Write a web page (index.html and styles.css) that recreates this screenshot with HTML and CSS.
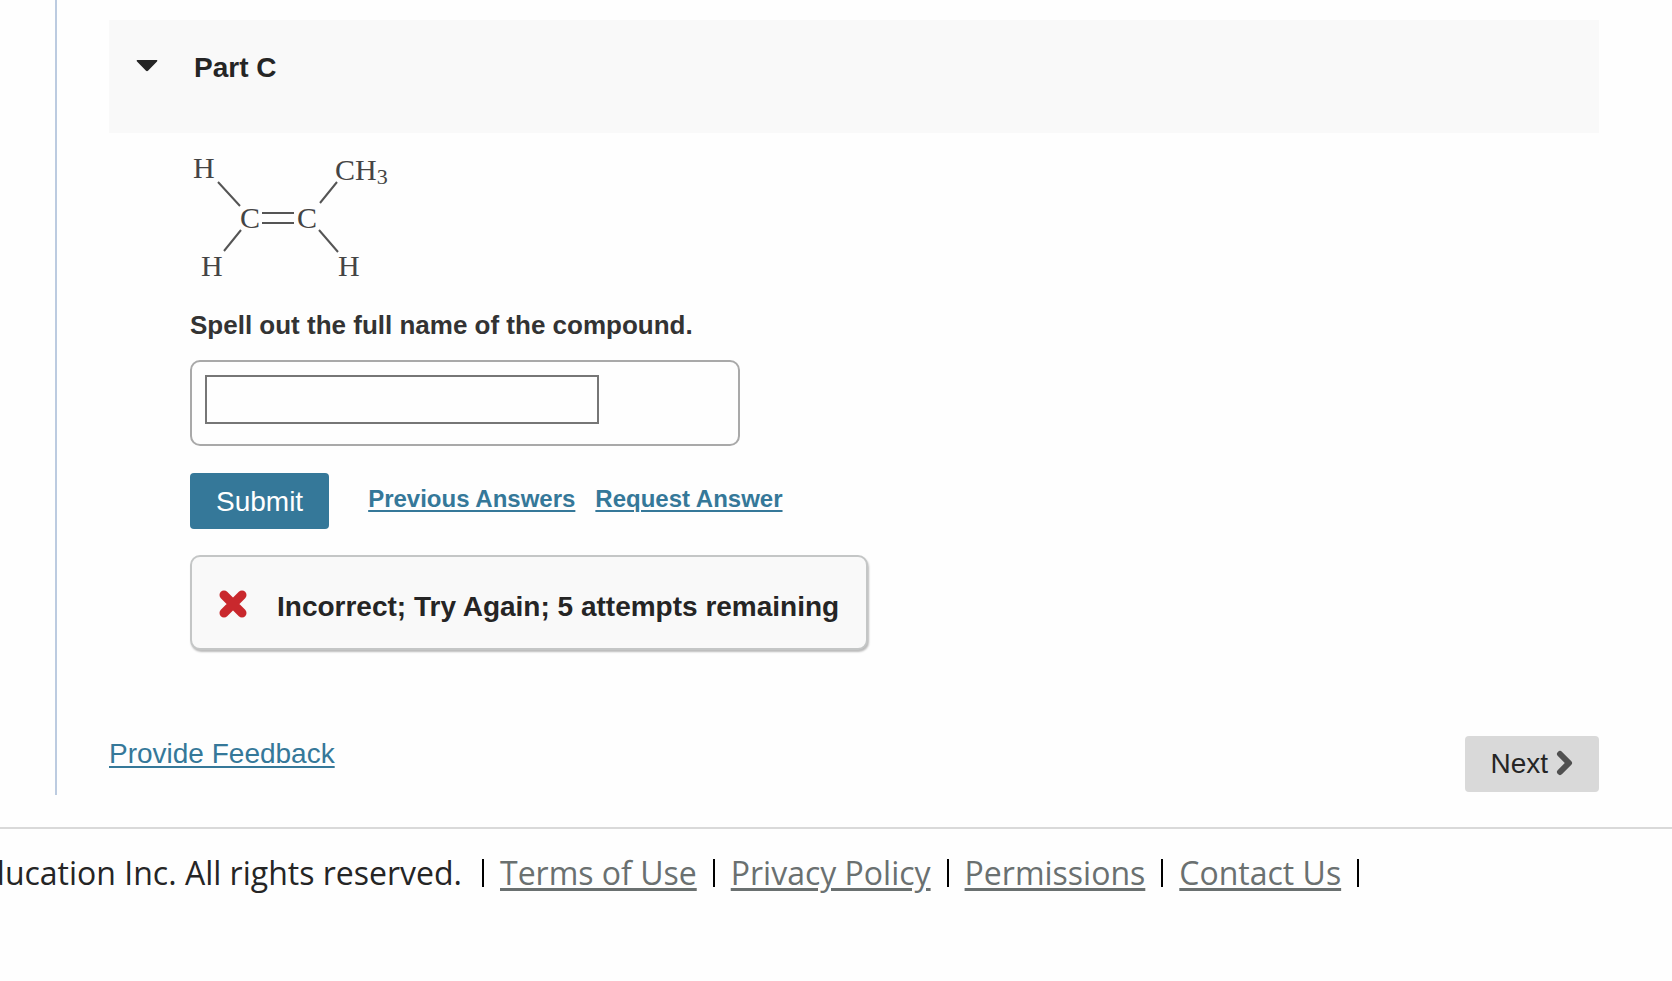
FILE: index.html
```html
<!DOCTYPE html>
<html lang="en">
  <head>
    <meta charset="UTF-8" />
    <meta name="viewport" content="width=device-width, initial-scale=1.0" />
    <title>Part C</title>
    <link rel="stylesheet" href="styles.css">
  </head>
  <body>
    <main class="content">
      <!-- Part header -->
      <button type="button" class="part-header">
        <svg class="caret" width="22" height="12" viewBox="0 0 22 12" aria-hidden="true">
          <path d="M1 0h20q.8.8 0 1.600L12 10.800q-1 .8-2 0L1 1.600Q.2.800 1 0z" />
        </svg>
        <span>Part C</span>
      </button>

      <div class="part-body">
        <svg class="molecule" width="200" height="124" viewBox="0 0 200 124" role="img" aria-label="Structural formula">
          <g class="bonds">
            <path d="M28 31L50 55M34 100L51 79M130 52L147 31M129 79L148 101" />
            <path d="M72 62H104M72 72H104" />
          </g>
          <text x="3" y="27">H</text>
          <text x="145" y="29">CH<tspan class="sub" dy="4">3</tspan></text>
          <text x="50" y="77">C</text>
          <text x="107" y="77">C</text>
          <text x="11" y="125">H</text>
          <text x="148" y="125">H</text>
        </svg>

        <form class="answer-form">
          <label for="answer">Spell out the full name of the compound.</label>
          <div class="answer-box">
            <input type="text" id="answer" name="answer" />
          </div>
          <div class="actions">
            <button type="submit" class="submit">Submit</button>
            <a href="#previous">Previous Answers</a>
            <a href="#request">Request Answer</a>
          </div>
        </form>

        <div class="result">
          <svg width="28" height="28" viewBox="0 0 28 28" aria-hidden="true">
            <path d="M5 5L23 23M23 5L5 23" />
          </svg>
          <span>Incorrect; Try Again; 5 attempts remaining</span>
        </div>
      </div>

      <div class="bottom-row">
        <a href="#feedback">Provide Feedback</a>
        <button type="button" class="next">
          Next
          <svg width="18" height="28" viewBox="0 0 18 28" aria-hidden="true">
            <path d="M4 4L13 13L4 22" />
          </svg>
        </button>
      </div>
    </main>

    <!-- Footer -->
    <footer class="footer">
      <div class="copyright"><span>Education Inc. All rights reserved.</span></div>
      <ul class="footer-links">
        <li><a href="#terms">Terms of Use</a></li>
        <li><a href="#privacy">Privacy Policy</a></li>
        <li><a href="#permissions">Permissions</a></li>
        <li><a href="#contact">Contact Us</a></li>
      </ul>
    </footer>
  </body>
</html>
```

FILE: styles.css
```css
* {
  box-sizing: border-box;
}

body {
  margin: 0;
  background: #fefefe;
  color: #252525;
  font-family: "Liberation Sans", Arial, sans-serif;
  font-size: 28px;
  line-height: 32px;
}

a {
  color: #357899;
  text-underline-offset: 3px;
  text-decoration-thickness: 2px;
}

button {
  border: none;
  border-radius: 4px;
  font: inherit;
  cursor: pointer;
}

.content {
  margin-left: 55px;
  padding: 20px 73px 3px 52px;
  border-left: 2px solid #bccbe0;
}

/* Part header */
.part-header {
  display: flex;
  align-items: flex-start;
  gap: 36px;
  width: 100%;
  height: 113px;
  padding: 32px 27px;
  border-radius: 0;
  background: #f9f9f9;
  color: #252525;
  font-weight: bold;
}

.caret {
  margin-top: 8px;
  fill: #252525;
}

.part-body {
  padding: 18px 0 0 81px;
}

/* Structure drawing */
.molecule {
  display: block;
  overflow: visible;
  font-family: "Liberation Serif", "Times New Roman", serif;
  font-size: 30px;
  fill: #444;
}

.molecule .sub {
  font-size: 22px;
}

.bonds {
  fill: none;
  stroke: #555;
  stroke-width: 2;
}

/* Answer */
.answer-form label {
  display: block;
  margin: 34px 0 19px;
  color: #333;
  font-size: 26px;
  font-weight: bold;
}

.answer-box {
  max-width: 550px;
  height: 86px;
  padding: 13px;
  border: 2px solid #a9a9a9;
  border-radius: 10px;
}

.answer-box input {
  display: block;
  width: 394px;
  max-width: 100%;
  height: 49px;
  padding: 4px 8px;
  border: 2px solid #767676;
  background: #fefefe;
  font: inherit;
}

.actions {
  display: flex;
  align-items: center;
  gap: 20px;
  margin-top: 27px;
}

.actions a {
  padding-bottom: 4px;
  font-size: 24px;
  font-weight: bold;
}

.submit {
  height: 56px;
  margin-right: 19px;
  padding: 2px 26px 0;
  background: #357899;
  color: #fff;
}

.result {
  display: flex;
  align-items: center;
  gap: 30px;
  width: fit-content;
  height: 95px;
  margin-top: 26px;
  padding: 8px 27px 0;
  border: 2px solid #c4c6c6;
  border-radius: 10px;
  background: #f9f9f9;
  box-shadow: 1px 2px 2px #bbb;
  font-weight: bold;
}

.result svg {
  margin-bottom: 6px;
  stroke: #c9282d;
  stroke-width: 9;
  stroke-linecap: round;
}

.bottom-row {
  display: flex;
  justify-content: space-between;
  align-items: flex-start;
  margin-top: 86px;
}

.bottom-row a {
  margin-top: 2px;
}

.next {
  display: flex;
  align-items: center;
  gap: 8px;
  height: 56px;
  padding: 0 25px;
  background: #d9d9d9;
  color: #252525;
}

.next svg {
  fill: none;
  stroke: #505050;
  stroke-width: 6;
  stroke-linecap: round;
  stroke-linejoin: round;
}

/* Footer */
.footer {
  display: flex;
  margin-top: 32px;
  padding-top: 22px;
  border-top: 2px solid #d9d9d9;
  font-family: "Open Sans", "Noto Sans", sans-serif;
  font-size: 32px;
  line-height: 44px;
}

.copyright {
  display: flex;
  flex: none;
  justify-content: flex-end;
  width: 482px;
  padding-right: 20px;
  overflow: hidden;
  white-space: nowrap;
}

.footer-links {
  display: flex;
  align-items: center;
  height: 44px;
  margin: 0;
  padding: 0;
  list-style: none;
  white-space: nowrap;
}

.footer-links li {
  display: flex;
  align-items: center;
}

.footer-links li::after,
.footer-links li:first-child::before {
  content: "";
  width: 2px;
  height: 28px;
  background: #000;
}

.footer-links a {
  margin: 0 16px;
  color: #6a7070;
  text-decoration-thickness: 3px;
}
```
